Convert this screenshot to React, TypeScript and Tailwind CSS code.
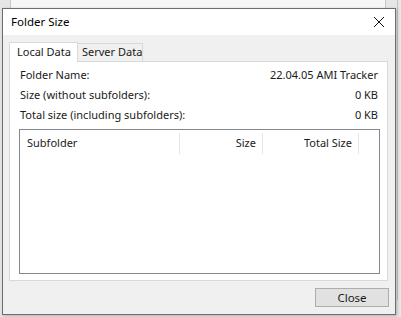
import React from "react";

const font = { fontFamily: '"Noto Sans", "Segoe UI", sans-serif' };

const rows = [
  { label: "Folder Name:", value: "22.04.05 AMI Tracker" },
  { label: "Size (without subfolders):", value: "0 KB" },
  { label: "Total size (including subfolders):", value: "0 KB" },
];

export default function App() {
  return (
    <div
      className="relative w-[401px] h-[317px] overflow-hidden bg-[#e6e6e6] text-[11px] text-[#1a1a1a] whitespace-nowrap"
      style={font}
    >
      {/* window behind the dialog */}
      <div className="absolute left-[10px] top-0 w-[376px] h-[8px] bg-[#f7f7f7] border-x border-[#c8c8c8]" />
      <div className="absolute left-[397px] top-0 w-px h-[300px] bg-[#c4c4c4]" />

      <div className="relative ml-[2px] mt-[8px] w-[394px] h-[307px] flex flex-col border border-[#6e6e6e] bg-[#f0f0f0] shadow-[1px_1px_3px_rgba(0,0,0,0.25)]">
        {/* title bar */}
        <div className="h-[26px] bg-white flex items-center justify-between pl-[8px] pr-[9px]">
          <span className="text-[11.5px] text-black">Folder Size</span>
          <svg width="12" height="12" viewBox="0 0 12 12" className="mr-[1px]">
            <path d="M1 1 L11 11 M11 1 L1 11" stroke="#111" strokeWidth="1" fill="none" />
          </svg>
        </div>

        {/* tabs */}
        <div className="ml-[6px] mr-[7px] mt-[7px] flex items-end">
          <div className="h-[20px] w-[69px] bg-white border border-b-0 border-[#d9d9d9] flex items-center pl-[7px] relative z-10 -mb-px">
            Local Data
          </div>
          <div className="h-[18px] w-[65px] bg-[#f0f0f0] border border-l-0 border-b-0 border-[#d9d9d9] flex items-center pl-[4px]">
            Server Data
          </div>
        </div>

        {/* tab panel */}
        <div className="ml-[6px] mr-[7px] h-[220px] bg-white border border-[#d9d9d9] flex flex-col pt-[3px] pl-[9px] pr-[7px] pb-[6px]">
          {rows.map((r) => (
            <div key={r.label} className="h-[20px] flex items-center justify-between pl-[1px] pr-[2px]">
              <span>{r.label}</span>
              <span>{r.value}</span>
            </div>
          ))}

          <div className="mt-[4px] flex-1 border border-[#828790] bg-white">
            <div className="flex h-[24px] items-center">
              <div className="w-[160px] h-[21px] mt-[2px] flex items-center pl-[7px] border-r border-[#e5e5e5]">
                Subfolder
              </div>
              <div className="w-[83px] h-[21px] mt-[2px] flex items-center justify-end pr-[6px] border-r border-[#e5e5e5]">
                Size
              </div>
              <div className="w-[96px] h-[21px] mt-[2px] flex items-center justify-end pr-[6px] border-r border-[#e5e5e5]">
                Total Size
              </div>
            </div>
          </div>
        </div>

        {/* buttons */}
        <div className="flex justify-end mt-[7px] mr-[6px]">
          <button className="w-[74px] h-[19px] bg-[#e1e1e1] border border-[#adadad] flex items-center justify-center text-[11.5px] leading-none">
            Close
          </button>
        </div>
      </div>
    </div>
  );
}
